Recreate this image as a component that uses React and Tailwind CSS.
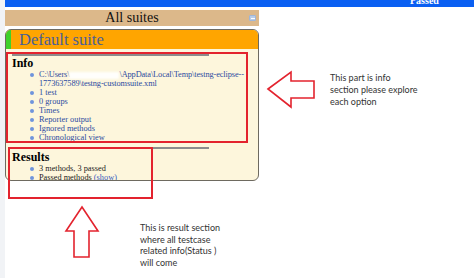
export default function App() {
  const serif = { fontFamily: '"Liberation Serif", "Times New Roman", serif' };
  const Bullet = () => (
    <span className="inline-block w-[4px] h-[4px] rounded-full bg-[#6f94dc] mr-[5px] shrink-0 mt-[3px]" />
  );
  const infoItems = ["1 test", "0 groups", "Times", "Reporter output", "Ignored methods", "Chronological view"];
  return (
    <div className="relative w-[474px] h-[278px] bg-white overflow-hidden flex" style={serif}>
      <div className="w-[5px] h-full bg-[#f1f3f6]" />
      <div className="flex-1 flex flex-col">
        <div className="h-[7px] bg-[#0a5ff2] relative overflow-hidden">
          <span className="absolute left-[405px] top-[-7px] text-[10px] font-bold text-white">Passed</span>
        </div>
        <div className="pt-[3px] w-[254px]">
          <div className="relative h-[16px] bg-[#dcb88a] flex items-center justify-center text-[14px] leading-[16px] text-[#111]">
            All suites
            <span className="absolute right-[3px] top-[5px] w-[7px] h-[6px] rounded-[1px] bg-[#b9cde8] border border-[#9fb6d8] flex items-center justify-center">
              <span className="w-[4px] h-[1px] bg-white" />
            </span>
          </div>
          <div className="mt-[3px] h-[152px] rounded-[6px] border border-[#6e6a60] overflow-hidden bg-[#fdf6dc] flex flex-col">
            <div className="h-[19px] bg-[#ffa500] flex items-stretch shrink-0">
              <div className="w-[5px] bg-[#3ed12c]" />
              <span className="ml-[8px] text-[16.5px] leading-[19px] text-[#4a5f96]">Default suite</span>
            </div>
            <div className="pl-[6px] pt-[5px] flex flex-col">
              <div className="h-[2px] w-[197px] bg-[#8c8c8c]" />
              <div className="mt-[1px] text-[12px] leading-[12px] font-bold text-black">Info</div>
              <div className="pl-[18px] mt-[1px] text-[8.3px] leading-[9px] text-[#2c4aa0] flex flex-col">
                <div className="flex">
                  <Bullet />
                  <div className="whitespace-nowrap tracking-[-0.1px]">
                    <div>
                      C:\Users\<span className="inline-block w-[50px] h-[7px] bg-white/90 align-middle blur-[1px]" />\AppData\Local\Temp\testng-eclipse--
                    </div>
                    <div>1773637589\testng-customsuite.xml</div>
                  </div>
                </div>
                {infoItems.map((t) => (
                  <div key={t} className="flex">
                    <Bullet />
                    <span>{t}</span>
                  </div>
                ))}
              </div>
              <div className="mt-[5px] h-[2px] w-[197px] bg-[#8c8c8c]" />
              <div className="mt-[2px] text-[12px] leading-[12px] font-bold text-black">Results</div>
              <div className="pl-[18px] mt-[1px] text-[8.3px] leading-[9px] text-[#222] flex flex-col">
                <div className="flex"><Bullet /><span>3 methods, 3 passed</span></div>
                <div className="flex"><Bullet /><span>Passed methods <span className="text-[#3a5cc0]">(show)</span></span></div>
              </div>
            </div>
          </div>
        </div>
      </div>

      {/* annotation overlays */}
      <div className="absolute left-[6px] top-[52px] w-[242px] h-[91px] border-2 border-[#e3232e]" />
      <div className="absolute left-[8px] top-[147px] w-[145px] h-[52px] border-2 border-[#e3232e]" />
      <svg className="absolute left-0 top-0" width="474" height="278">
        <polygon points="268,89 291,72 291,81 314,81 314,98 291,98 291,107" fill="none" stroke="#e3232e" strokeWidth="1.6" />
        <polygon points="82,207 98,231 89,231 89,257 74,257 74,231 66,231" fill="none" stroke="#e3232e" strokeWidth="1.6" />
      </svg>
      <div className="absolute left-[330px] top-[72px] text-[9px] leading-[12px] text-[#333]" style={{ fontFamily: 'Lato, "Open Sans", sans-serif' }}>
        This part is info<br />section please explore<br />each option
      </div>
      <div className="absolute left-[140px] top-[222px] text-[9px] leading-[11.7px] text-[#333]" style={{ fontFamily: 'Lato, "Open Sans", sans-serif' }}>
        This is result section<br />where all testcase<br />related info(Status )<br />will come
      </div>
    </div>
  );
}
